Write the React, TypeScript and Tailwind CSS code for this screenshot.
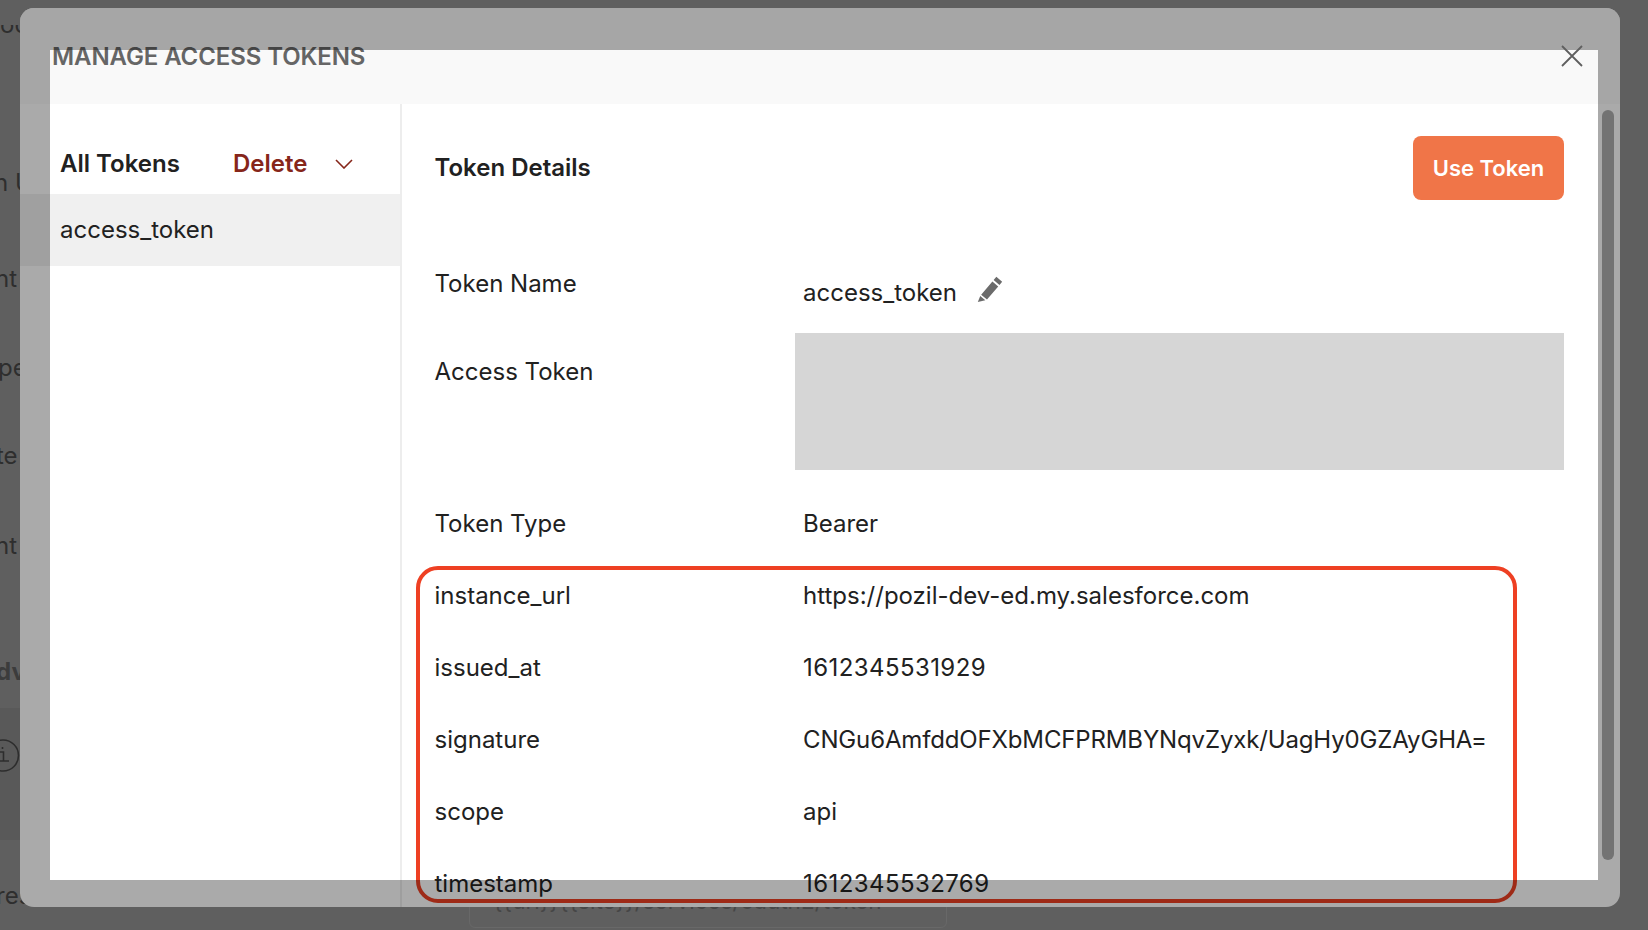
import React from "react";

const details = [
  { name: "instance_url", value: "https://pozil-dev-ed.my.salesforce.com", cls: "" },
  { name: "issued_at", value: "1612345531929", cls: "tracking-[0.42px]" },
  { name: "signature", value: "CNGu6AmfddOFXbMCFPRMBYNqvZyxk/UagHy0GZAyGHA=", cls: "tracking-[-0.14px]" },
  { name: "scope", value: "api", cls: "" },
  { name: "timestamp", value: "1612345532769", cls: "tracking-[0.42px]" },
];

const behind = [
  { text: "n URL", cls: "top-[165px] -left-[6px]" },
  { text: "nt", cls: "top-[261px] -left-[5px]" },
  { text: "pe", cls: "top-[350px] -left-[2px]" },
  { text: "te", cls: "top-[438px] -left-[4px]" },
  { text: "nt", cls: "top-[528px] -left-[5px]" },
];

const App = () => {
  return (
    <div className="relative w-[1648px] h-[930px] overflow-hidden bg-[#8f8f8f] text-[24px] text-[#212121] font-['Inter',sans-serif]">
      {/* page behind the modal */}
      <div className="absolute left-0 top-[708px] w-[20px] h-[132px] bg-[#868686]" />
      <div className="absolute left-0 top-[25px] h-[9px] overflow-hidden text-[#464646] whitespace-nowrap">
        <div className="-mt-[18px]">oo</div>
      </div>
      {behind.map((b, i) => (
        <div key={i} className={`absolute text-[#464646] whitespace-nowrap ${b.cls}`}>
          {b.text}
        </div>
      ))}
      <div className="absolute -left-[4px] top-[654px] font-bold text-[#5a5a5a] whitespace-nowrap">dv</div>
      <svg className="absolute left-0 top-[739px]" width="20" height="33" viewBox="0 0 20 33" fill="none" stroke="#444444" strokeWidth="1.6">
        <circle cx="3" cy="16.5" r="15.5" />
        <path d="M0 13h3.5v9M-2 22h11M2.5 8v2" />
      </svg>
      <div className="absolute -left-[4px] top-[878px] text-[#464646] whitespace-nowrap">res</div>
      <div className="absolute left-[469px] top-[880px] w-[478px] h-[48px] border border-[#9c9c9c] rounded-md pl-[23px] pt-[3px] text-[22.5px] text-[#6a6a6a] whitespace-nowrap">
        {"{{url}}{{site}}/services/oauth2/token"}
      </div>

      {/* modal */}
      <div className="absolute left-[20px] top-[8px] w-[1600px] h-[899px] bg-white rounded-[14px] overflow-hidden flex flex-col">
        <header className="h-[96px] shrink-0 bg-[#f9f9f9] pl-[32px] pt-[34px] text-[24px] leading-[30px] font-semibold tracking-[-0.1px] text-[#666666]">
          MANAGE ACCESS TOKENS
        </header>
        <div className="flex flex-1 min-h-0">
          <aside className="w-[382px] shrink-0 border-r-2 border-[#ededed] pl-[30px]">
            <div className="h-[90px] flex items-center pt-[30px] font-semibold pl-[10px]">
              <span className="w-[173px]">All Tokens</span>
              <span className="text-[#86261a]">Delete</span>
              <svg className="ml-[28px] text-[#86261a]" width="18" height="10" viewBox="0 0 18 10" fill="none" stroke="currentColor" strokeWidth="1.6">
                <path d="M1 1l8 8 8-8" />
              </svg>
            </div>
            <div className="-ml-[30px] h-[72px] bg-[#f0f0f0] flex items-center pl-[40px]">access_token</div>
          </aside>
          <main className="flex-1 pl-[32.5px] pr-[56px] pt-[32px]">
            <div className="flex items-center justify-between h-[64px]">
              <h2 className="font-semibold">Token Details</h2>
              <button className="h-[64px] w-[151px] rounded-lg bg-[#f07548] text-white text-[22px] font-semibold">Use Token</button>
            </div>
            <div className="flex mt-[65px] h-[68px]">
              <div className="w-[368.5px] pt-[1px]">Token Name</div>
              <div className="flex items-start pt-[10px] gap-[20px]">
                access_token
                <svg className="mt-[1px]" width="26" height="26" viewBox="0 0 25 25" fill="#6b6b6b">
                  <path d="M18.6.8l5.6 4.7-2.6 3.1-5.6-4.7zM14.8 5.4l5.6 4.7L9.6 22.7l-5.6-4.7zM3.1 19.3l4.9 4.1L.8 25z" />
                </svg>
              </div>
            </div>
            <div className="flex h-[137px]">
              <div className="w-[360.5px] pt-[21px]">Access Token</div>
              <div className="flex-1 bg-[#d6d6d6]" />
            </div>
            <div className="flex mt-[36px] h-[72px]">
              <div className="w-[368.5px]">Token Type</div>
              <div>Bearer</div>
            </div>
            {details.map((d) => (
              <div key={d.name} className="flex h-[72px] whitespace-nowrap">
                <div className="w-[368.5px]">{d.name}</div>
                <div className={d.cls}>{d.value}</div>
              </div>
            ))}
          </main>
        </div>
        <div className="absolute left-[1582px] top-[102px] w-[12px] h-[750px] rounded-full bg-[#adadad]" />
      </div>

      {/* annotation */}
      <div className="absolute left-[416px] top-[566px] w-[1101px] h-[337px] border-4 border-[#ee4023] rounded-[22px]" />

      {/* dimmed frame around the visible area */}
      <div className="absolute left-[50px] top-[50px] w-[1548px] h-[830px] shadow-[0_0_0_2000px_rgba(0,0,0,0.333)]" />

      <svg className="absolute left-[1561px] top-[45px]" width="22" height="22" viewBox="0 0 22 22" stroke="#5f5f5f" strokeWidth="1.8">
        <path d="M1 1l20 20M21 1L1 21" />
      </svg>
    </div>
  );
};

export default App;
